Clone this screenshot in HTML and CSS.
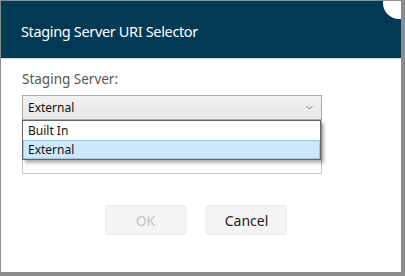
FILE: index.html
```html
<!DOCTYPE html>
<html>

<head>
    <meta charset="UTF-8">
    <title>Staging Server URI Selector</title>
    <link rel="stylesheet" href="styles.css">
</head>

<body>
    <div class="dialog">
        <div class="header">
            <h1>Staging Server URI Selector</h1>
        </div>

        <div class="content">
            <label class="field-label">Staging Server:</label>

            <div class="combo-area">
                <div class="combo">
                    <span>External</span>
                    <svg class="chevron" width="7" height="5" viewBox="0 0 7 5">
                        <path d="M0.5 1 L3.5 4 L6.5 1" fill="none" stroke="#7a7a7a" stroke-width="1" />
                    </svg>
                </div>
                <div class="textbox"></div>
                <ul class="options">
                    <li>Built In</li>
                    <li class="selected">External</li>
                </ul>
            </div>

            <div class="buttons">
                <button disabled>OK</button>
                <button>Cancel</button>
            </div>
        </div>

        <div class="close-circle"></div>
    </div>
</body>

</html>
```

FILE: styles.css
```css
html,
body {
    margin: 0;
    height: 100%;
}

body {
    background-color: #8c8c8c;
    font-family: "Noto Sans", "Open Sans", sans-serif;
    overflow: hidden;
}

.dialog {
    position: relative;
    width: 400px;
    height: 271px;
    margin: 1px 0 0 1px;
    background-color: #fff;
    overflow: hidden;
}

.header {
    height: 57px;
    background-color: #023a55;
    border-bottom: 1px solid #c9dbe4;
    display: flex;
    align-items: center;
    padding-left: 20px;
}

.header h1 {
    margin: 0;
    color: #fff;
    font-size: 14.5px;
    font-weight: normal;
    letter-spacing: -0.35px;
    padding-top: 2px;
}

.content {
    padding: 11px 0 0 21px;
}

.field-label {
    display: block;
    color: #555;
    font-size: 13.5px;
    height: 25px;
}

.combo-area {
    position: relative;
    width: 300px;
    height: 80px;
}

.combo {
    box-sizing: border-box;
    height: 25px;
    border: 1px solid #adadad;
    background: linear-gradient(#f1f1f1, #e6e6e6);
    display: flex;
    align-items: center;
    justify-content: space-between;
    padding: 0 8px 0 5px;
    font-size: 12px;
    color: #111;
}

.textbox {
    box-sizing: border-box;
    height: 54px;
    border: 1px solid #c4c4c4;
    border-top: none;
}

.options {
    position: absolute;
    left: 0;
    top: 25px;
    width: 299px;
    box-sizing: border-box;
    margin: 0;
    padding: 0;
    list-style: none;
    background: #fff;
    border: 1px solid #646464;
    box-shadow: 3px 3px 3px rgba(0, 0, 0, 0.3);
    font-size: 12px;
    color: #111;
}

.options li {
    box-sizing: border-box;
    height: 19px;
    line-height: 18px;
    padding-left: 4px;
    border: 1px solid transparent;
}

.options li.selected {
    background-color: #cce8ff;
    border-color: #99c9ef;
}

.buttons {
    display: flex;
    gap: 20px;
    padding: 30px 0 0 83px;
}

button {
    width: 81px;
    height: 30px;
    border: 1px solid #ececec;
    border-radius: 3px;
    background-color: #f4f4f4;
    color: #222;
    font-family: inherit;
    font-size: 14px;
}

button:disabled {
    color: #c3c3c3;
}

.close-circle {
    position: absolute;
    right: -14px;
    top: -14px;
    width: 32px;
    height: 32px;
    border-radius: 50%;
    background-color: #fff;
}
```
